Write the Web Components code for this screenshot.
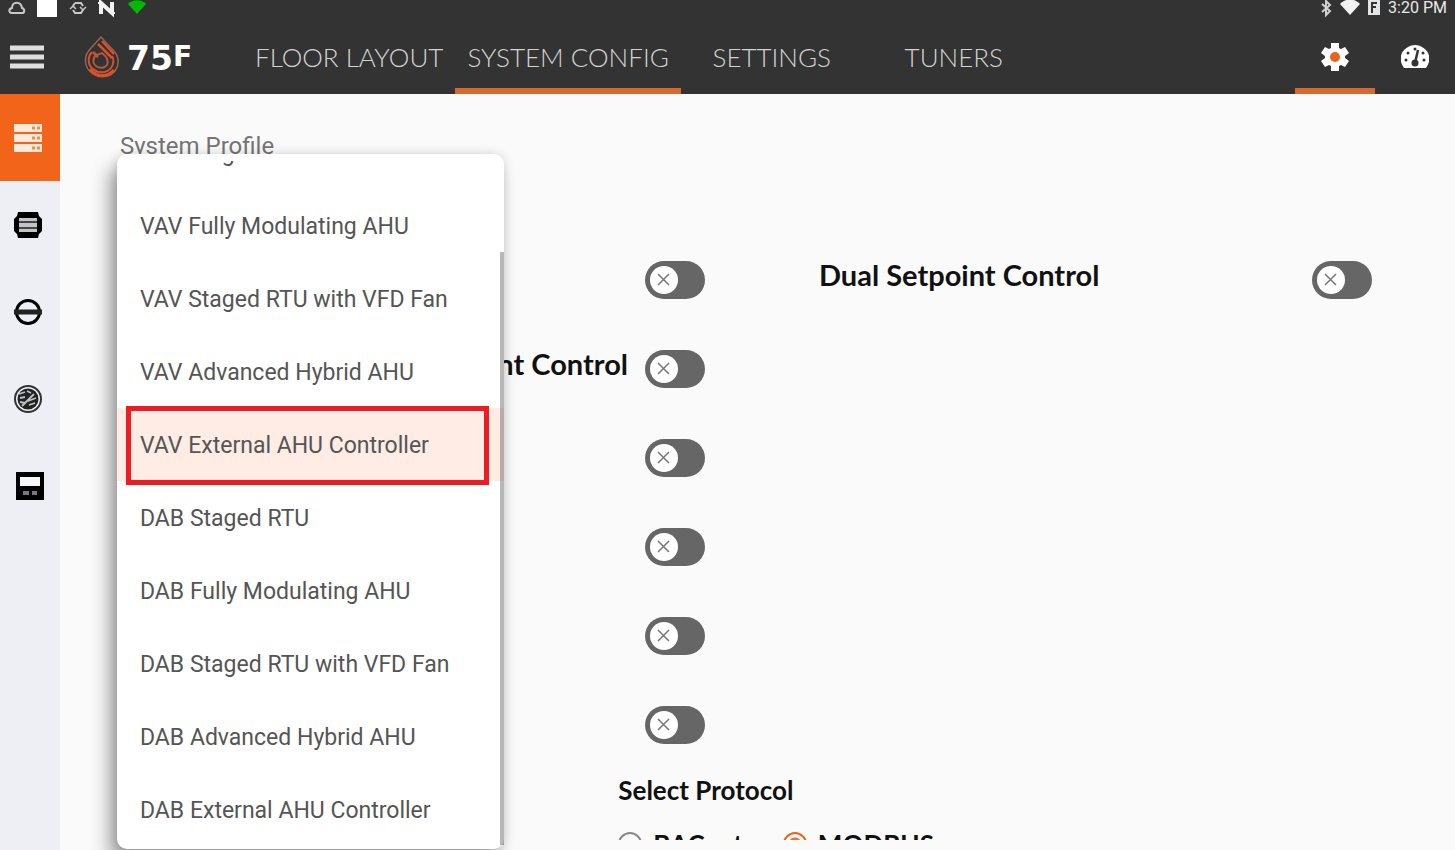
<!DOCTYPE html>
<html lang="en">
<head>
<meta charset="utf-8">
<title>75F System Config</title>
<style>
    html, body { height: 100%; }
    body {
        margin: 0;
        background: #fafafa;
        font-family: Lato, sans-serif;
        color: #111;
        --accent: #f26419;
        --accent-dark: #d9682f;
        --bar: #333333;
    }
</style>
</head>
<body>
<app-shell>
    <status-bar slot="top" time="3:20 PM"></status-bar>
    <nav-bar slot="top">
        <nav-tab label="FLOOR LAYOUT"></nav-tab>
        <nav-tab label="SYSTEM CONFIG" active></nav-tab>
        <nav-tab label="SETTINGS"></nav-tab>
        <nav-tab label="TUNERS"></nav-tab>
    </nav-bar>
    <side-rail slot="side"></side-rail>
    <settings-panel>
        <setting-row name="Setpoint control"></setting-row>
        <setting-row label="Dual Setpoint Control"></setting-row>
        <setting-row class="first" label="Static Pressure Setpoint Control"></setting-row>
        <setting-row class="first" name="Humidity control"></setting-row>
        <setting-row class="first" name="Occupancy mode control"></setting-row>
        <setting-row class="first" name="Humidification"></setting-row>
        <setting-row class="first" name="Dehumidification"></setting-row>
        <protocol-picker slot="footer"></protocol-picker>
    </settings-panel>
    <profile-menu slot="overlay" selected="VAV External AHU Controller"></profile-menu>
</app-shell>

<script>
class BaseElement extends HTMLElement {
    connectedCallback() {
        if (this.shadowRoot) return;
        this.attachShadow({ mode: 'open' });
        this.shadowRoot.innerHTML = this.template();
        this.ready();
    }

    template() { return ''; }

    ready() {}
}

class AppShell extends BaseElement {
    template() {
        return `
            <style>
                :host { display: flex; flex-direction: column; height: 100vh; overflow: hidden; }
                header { flex: none; background: var(--bar); }
                .body { flex: 1; display: flex; min-height: 0; }
                main { flex: 1; min-width: 0; display: flex; position: relative; background: #fafafa; }
            </style>
            <header><slot name="top"></slot></header>
            <div class="body">
                <slot name="side"></slot>
                <main><slot></slot><slot name="overlay"></slot></main>
            </div>
        `;
    }
}

class StatusBar extends BaseElement {
    template() {
        return `
            <style>
                :host {
                    display: flex;
                    justify-content: space-between;
                    align-items: center;
                    height: 16px;
                    padding: 0 8px 4px;
                    color: #e8e8e8;
                    font: 16px/16px Roboto, sans-serif;
                }
                div { display: flex; align-items: center; }
                .left { gap: 12px; }
                .right { gap: 8px; }
                svg { display: block; overflow: visible; }
            </style>
            <div class="left">
                <svg width="18" height="16" fill="none" stroke="#c8c8c8" stroke-width="2"><path d="M4 13h10c3 0 3-4 0-5-1-7-10-7-10 0-4 1-3 5 0 5z"/></svg>
                <svg width="20" height="16"><path d="M-1-3h20v20H-1z" fill="#fff"/></svg>
                <svg width="16" height="16" fill="none" stroke="#c8c8c8" stroke-width="2"><path d="M5 3h6l2 3M13 10l-2 3H5l-2-3M3 6l2-3"/><path d="M10 7l3 3 3-3M0 9l3-3 3 3" stroke-width="1.500"/></svg>
                <svg width="18" height="16" fill="none" stroke="#f2f2f2" stroke-width="4"><path d="M3 14V3l11 10V2"/><path d="M0 3h4M13 13h4" stroke-width="2"/></svg>
                <svg width="18" height="16"><path d="M0 4C5-1 13-1 18 4L9 14z" fill="#06b806"/></svg>
            </div>
            <div class="right">
                <svg width="12" height="16" fill="none" stroke="#d0d0d0" stroke-width="2"><path d="M2 4l8 7-4 4V1l4 4-8 7"/></svg>
                <svg width="20" height="16"><path d="M0 4C6-2 14-2 20 4L10 15z" fill="#f2f2f2"/></svg>
                <svg width="12" height="16"><path d="M0-1h12v16H0z" fill="#e4e4e4"/><path d="M4 13V3h5M4 7h4" stroke="#333" stroke-width="2" fill="none"/></svg>
                <span>${this.getAttribute('time')}</span>
            </div>
        `;
    }
}

class NavBar extends BaseElement {
    template() {
        return `
            <style>
                :host { display: flex; align-items: stretch; height: 74px; }
                button { padding: 0; border: 0; background: none; cursor: pointer; }
                svg { display: block; }
                .menu { padding: 0 10px; display: flex; align-items: center; }
                .brand {
                    display: flex;
                    align-items: center;
                    gap: 7px;
                    width: 159px;
                    margin-left: 30px;
                    color: #fff;
                    text-decoration: none;
                    font: bold 33px/36px "DejaVu Sans", sans-serif;
                }
                .brand span { padding-top: 4px; }
                .brand small { font-size: 28px; line-height: 32px; vertical-align: top; }
                nav { display: flex; flex: 1; }
                .tool {
                    box-sizing: border-box;
                    width: 80px;
                    display: flex;
                    align-items: center;
                    justify-content: center;
                    border: solid transparent;
                    border-width: 6px 0;
                }
                .tool.active { border-bottom-color: var(--accent-dark); }
            </style>
            <button class="menu" aria-label="Menu">
                <svg width="34" height="24" stroke="#dedede" stroke-width="5"><path d="M0 3h34M0 12h34M0 21h34"/></svg>
            </button>
            <a class="brand" href="#home" aria-label="75F">
                <svg width="36" height="44" viewBox="0 0 36 44" fill="none" stroke="#d9512a" stroke-width="2">
                    <path d="M17 2L7 13C-2 22 1 34 9 39c7 5 17 3 22-3 5-7 4-15-2-21L17 2z" stroke="#9a6350" stroke-width="1.500"/>
                    <path d="M14 9l14 14M18 6l12 13M9 17l5 5" stroke-width="2.500"/>
                    <path d="M8 17c-5 6-4 13 1 17 6 5 14 4 18-1 3-4 3-9 1-12"/>
                    <path d="M12 20c-4 4-3 9 0 11 4 3 9 2 11-1 2-4 0-8-5-12z" stroke="#b05a3d"/>
                    <path d="M6 34c6 8 17 9 24 1" stroke-width="3"/>
                </svg>
                <span>75<small>F</small></span>
            </a>
            <nav><slot></slot></nav>
            <button class="tool active" aria-label="Settings">
                <svg width="28" height="28" viewBox="0 0 28 28">
                    <path d="M10 0h8v5l2 1 4-2 4 6-4 3v2l4 3-4 6-4-2-2 1v5h-8v-5l-2-1-4 2-4-6 4-3v-2l-4-3 4-6 4 2 2-1z" fill="#fff"/>
                    <circle cx="14" cy="14" r="5" fill="#e8641c"/>
                </svg>
            </button>
            <button class="tool" aria-label="Dashboard">
                <svg width="28" height="24" viewBox="0 0 28 24">
                    <path d="M3 23C-6 10 5 0 14 0s20 10 11 23z" fill="#fff"/>
                    <g fill="#333"><circle cx="7" cy="8" r="1.500"/><circle cx="5" cy="15" r="1.500"/><circle cx="22" cy="8" r="1.500"/><circle cx="23" cy="15" r="1.500"/><circle cx="14" cy="4" r="1.500"/><circle cx="14" cy="18" r="3.500"/></g>
                    <path d="M14 18l3-13" stroke="#333" stroke-width="2.500"/>
                </svg>
            </button>
        `;
    }
}

class NavTab extends BaseElement {
    template() {
        return `
            <style>
                :host { display: flex; min-width: 182px; }
                a {
                    flex: 1;
                    padding: 0 12px;
                    border: solid transparent;
                    border-width: 6px 0;
                    display: flex;
                    align-items: center;
                    justify-content: center;
                    color: #d2d2d2;
                    font: 300 26px/32px Lato, sans-serif;
                    text-decoration: none;
                    white-space: nowrap;
                }
                :host([active]) a { border-bottom-color: var(--accent-dark); }
            </style>
            <a href="#tab">${this.getAttribute('label')}</a>
        `;
    }
}

class SideRail extends BaseElement {
    template() {
        const items = [
            ['System', '<g fill="#ffe9dc"><path d="M0 0h28v8H0zM0 10h28v8H0zM0 20h28v8H0z"/></g><path d="M18 4h3M23 4h3M18 14h3M23 14h3M18 24h3M23 24h3" stroke="#f58a50" stroke-width="3"/>'],
            ['Zones', '<path d="M4 1h20l1 4 3 3v12l-3 3-1 4H4l-1-4-3-3V8l3-3z"/><path d="M5 7h18v14H5z" fill="#c4c4c8"/><path d="M5 11h18M5 17h18" stroke="#444" stroke-width="2"/>'],
            ['Sensors', '<circle cx="14" cy="14" r="11.500" fill="none" stroke="#000" stroke-width="3"/><path d="M0 14h28" stroke="#222" stroke-width="5"/>'],
            ['Gauges', '<circle cx="14" cy="14" r="13" fill="none" stroke="#333" stroke-width="2"/><circle cx="14" cy="14" r="10.500" fill="#222"/><path d="M5 9l6-2M6 13l5-1M8 21l12-12M14 16l8-3M15 20l6-2M13 6l4 2M6 17l5 1" stroke="#bfc0c5" stroke-width="1.800"/>'],
            ['Device', '<path d="M2 0h28v28H2z"/><path d="M6 5h20v9H6z" fill="#f6f6f8"/><path d="M9 21h6M18 21h5" stroke="#777" stroke-width="4"/>']
        ];
        return `
            <style>
                :host { display: block; flex: none; width: 60px; background: #eeeff5; }
                button {
                    display: flex;
                    align-items: center;
                    width: 100%;
                    height: 87px;
                    padding: 0 14px;
                    border: 0;
                    background: none;
                }
                button.active { background: var(--accent); }
                svg { display: block; overflow: visible; }
            </style>
            ${items.map(([name, art], i) => `
                <button class="${i === 0 ? 'active' : ''}" aria-label="${name}">
                    <svg width="28" height="28" viewBox="0 0 28 28">${art}</svg>
                </button>`).join('')}
        `;
    }
}

class SettingsPanel extends BaseElement {
    template() {
        return `
            <style>
                :host { flex: 1; min-width: 0; padding-bottom: 10px; display: flex; }
                .scroller { flex: 1; min-width: 0; padding: 36px 83px 0 60px; overflow: hidden; }
                h2 { margin: 0 0 73px; color: #757575; font: 24px/32px Roboto, sans-serif; }
                .grid { display: grid; grid-template-columns: 585fr 553fr; column-gap: 114px; margin-bottom: 5px; }
                ::slotted(.first) { grid-column: 1; }
            </style>
            <div class="scroller">
                <h2>System Profile</h2>
                <div class="grid"><slot></slot></div>
                <slot name="footer"></slot>
            </div>
        `;
    }
}

class SettingRow extends BaseElement {
    template() {
        const label = this.getAttribute('label');
        const name = this.getAttribute('name') || label;
        return `
            <style>
                :host { display: flex; align-items: center; height: 89px; gap: 17px; }
                label { flex: 1; padding-bottom: 10px; font: bold 29px/34px Lato, sans-serif; white-space: nowrap; }
                :host(.first) label { text-align: right; }
                .toggle { flex: none; display: grid; grid-template-columns: 60px; margin-left: auto; }
                .toggle > * { grid-area: 1 / 1; }
                input {
                    appearance: none;
                    width: 60px;
                    height: 38px;
                    margin: 0;
                    border-radius: 19px;
                    background: #666;
                }
                svg { pointer-events: none; }
            </style>
            ${label ? `<label for="switch">${label}</label>` : ''}
            <div class="toggle">
                <input id="switch" type="checkbox" role="switch" aria-label="${name}">
                <svg width="60" height="38">
                    <circle cx="19" cy="19" r="14" fill="#fff"/>
                    <path d="M13 13l11 11M24 13L13 24" stroke="#777" stroke-width="1.500"/>
                </svg>
            </div>
        `;
    }
}

class ProtocolPicker extends BaseElement {
    template() {
        return `
            <style>
                :host { display: block; padding-left: 39.8%; white-space: nowrap; }
                fieldset { margin: 0; padding: 0; border: 0; }
                legend { padding: 0; font: bold 26px/32px Lato, sans-serif; }
                .options { display: flex; gap: 40px; margin-top: 22px; }
                label { display: flex; align-items: center; gap: 11px; font: bold 26px/32px Lato, sans-serif; }
                input {
                    appearance: none;
                    box-sizing: border-box;
                    width: 24px;
                    height: 24px;
                    margin: 0;
                    border: 2px solid #888;
                    border-radius: 50%;
                }
                input:checked {
                    border-color: #e8641c;
                    background: radial-gradient(circle, #f0702c 6px, transparent 7px);
                }
            </style>
            <fieldset>
                <legend>Select Protocol</legend>
                <div class="options">
                    <label><input type="radio" name="protocol">BACnet</label>
                    <label><input type="radio" name="protocol" checked>MODBUS</label>
                </div>
            </fieldset>
        `;
    }
}

class ProfileMenu extends BaseElement {
    template() {
        const profiles = ['Default'];
        ['VAV', 'DAB'].forEach(kind => {
            ['Staged RTU', 'Fully Modulating AHU', 'Staged RTU with VFD Fan', 'Advanced Hybrid AHU', 'External AHU Controller']
                .forEach(type => profiles.push(`${kind} ${type}`));
        });
        const selected = this.getAttribute('selected');
        return `
            <style>
                :host {
                    position: absolute;
                    left: 57px;
                    top: 60px;
                    bottom: 1px;
                    width: 387px;
                    box-sizing: border-box;
                    padding: 7px 0 3px;
                    display: flex;
                    border-radius: 10px;
                    background: #fff;
                    box-shadow: -8px 14px 18px rgba(0, 0, 0, 0.35), 0 0 12px rgba(0, 0, 0, 0.15);
                }
                select {
                    flex: 1;
                    min-width: 0;
                    height: 100%;
                    padding: 0;
                    border: 0;
                    outline: 0;
                    background: none;
                    font: 23px Roboto, sans-serif;
                    scrollbar-width: none;
                }
                option {
                    height: 73px;
                    min-height: 73px;
                    padding: 24px 23px 0;
                    box-sizing: border-box;
                    color: #555;
                    -webkit-text-fill-color: #555;
                }
                option:checked { background: #ffece4 linear-gradient(#ffece4, #ffece4); }
                /* scroll position marker and callout lie over the list */
                .thumb { position: absolute; right: 0; top: 98px; bottom: 4px; width: 4px; background: rgba(0, 0, 0, 0.28); }
                .callout {
                    position: absolute;
                    left: 9px;
                    top: 252px;
                    width: 363px;
                    height: 79px;
                    box-sizing: border-box;
                    border: 5px solid #ed1c24;
                    pointer-events: none;
                }
            </style>
            <select size="9" aria-label="System Profile">
                ${profiles.map(p => `<option${p === selected ? ' selected' : ''}>${p}</option>`).join('')}
            </select>
            <div class="thumb"></div>
            <div class="callout"></div>
        `;
    }

    ready() {
        const list = this.shadowRoot.querySelector('select');
        const toEnd = () => { list.scrollTop = list.scrollHeight; };
        toEnd();
        requestAnimationFrame(toEnd);
    }
}

customElements.define('app-shell', AppShell);
customElements.define('status-bar', StatusBar);
customElements.define('nav-bar', NavBar);
customElements.define('nav-tab', NavTab);
customElements.define('side-rail', SideRail);
customElements.define('settings-panel', SettingsPanel);
customElements.define('setting-row', SettingRow);
customElements.define('protocol-picker', ProtocolPicker);
customElements.define('profile-menu', ProfileMenu);
</script>
</body>
</html>
